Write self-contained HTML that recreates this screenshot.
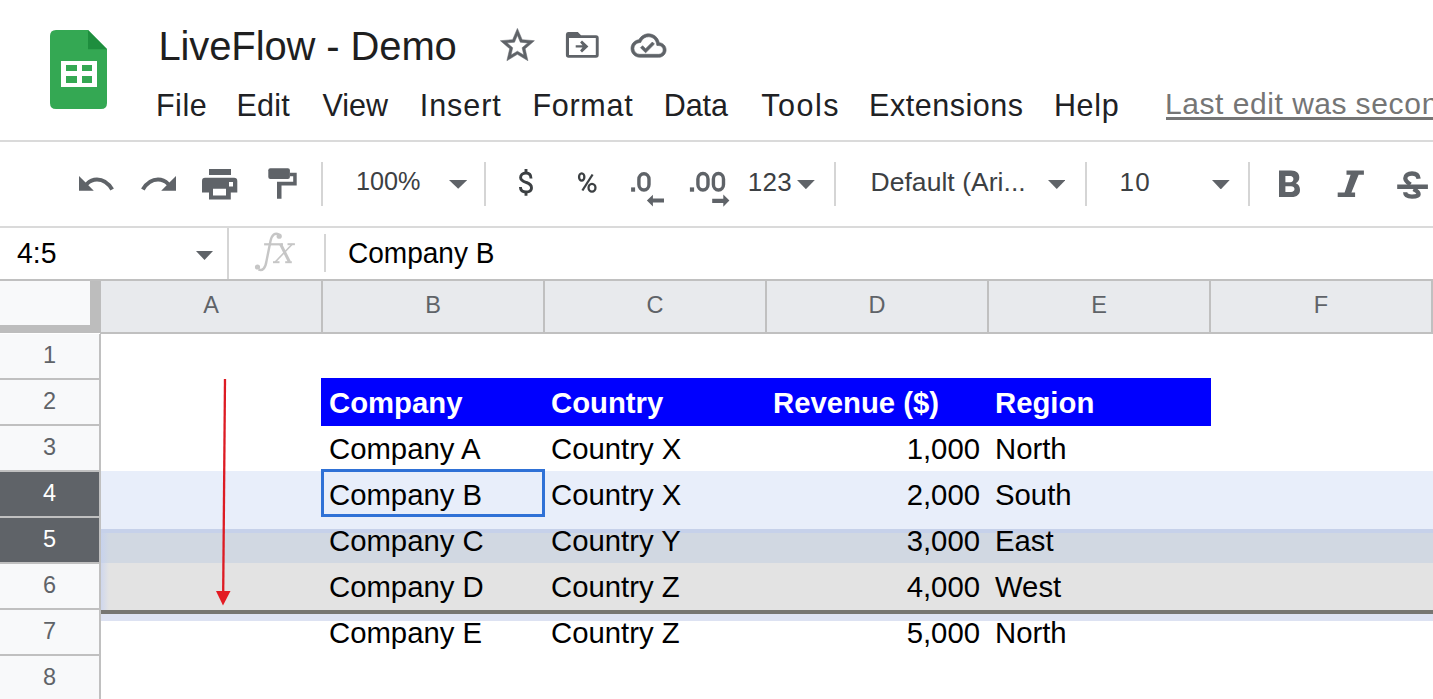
<!DOCTYPE html>
<html><head><meta charset="utf-8"><title>LiveFlow - Demo</title>
<style>
html,body{margin:0;padding:0;}
body{width:1433px;height:699px;overflow:hidden;position:relative;background:#fff;font-family:"Liberation Sans",sans-serif;}
.t{position:absolute;white-space:nowrap;}
.r{position:absolute;}
</style></head><body>
<svg class="r" style="left:50px;top:30px" width="58" height="80" viewBox="0 0 58 80">
<path d="M6 0 H38 L57 19 V73 Q57 79 51 79 H6 Q0 79 0 73 V6 Q0 0 6 0 Z" fill="#34a853"/>
<path d="M38 0 L57 19.3 H38 Z" fill="#1e8e3e"/>
<rect x="11" y="31" width="36" height="26" fill="#fff"/>
<rect x="16" y="35" width="11" height="6" fill="#34a853"/>
<rect x="32" y="35" width="10" height="6" fill="#34a853"/>
<rect x="16" y="46" width="11" height="7" fill="#34a853"/>
<rect x="32" y="46" width="10" height="7" fill="#34a853"/>
</svg>
<div class="t" style="left:158.42px;top:25.74px;font-size:40px;line-height:40px;color:#1f1f1f;font-weight:400;letter-spacing:-0.116px;">LiveFlow - Demo</div>
<svg class="r" style="left:496.5px;top:25.2px" width="40.8" height="40.8" viewBox="0 0 24 24" overflow="visible"><path fill="#5f6368" stroke="#5f6368" stroke-width="0.3" stroke-linejoin="round" d="M22 9.24l-7.19-.62L12 2 9.19 8.63 2 9.24l5.46 4.73L5.82 21 12 17.27 18.18 21l-1.63-7.03L22 9.24zM12 15.4l-3.76 2.27 1-4.28-3.32-2.88 4.38-.38L12 6.1l1.71 4.04 4.38.38-3.32 2.88 1 4.28L12 15.4z"/></svg>
<svg class="r" style="left:560px;top:26px" width="44" height="36" viewBox="0 0 44 36">
<path fill="#5f6368" fill-rule="evenodd" d="M8 6 H17.8 L21 9.3 H36 Q38.7 9.3 38.7 12 V29 Q38.7 31.7 36 31.7 H8.6 Q5.9 31.7 5.9 29 V8.6 Q5.9 6 8 6 Z M9 12.1 V29.1 H35.8 V12.1 Z"/>
<path fill="#5f6368" d="M15.7 19.3 H22.5 L20.1 16.4 L22 14.4 L28.4 20.45 L22 26.5 L20.1 24.5 L22.5 21.6 H15.7 Z"/>
</svg>
<svg class="r" style="left:631.4px;top:28px" width="35.1" height="35.1" viewBox="0 0 24 24" overflow="visible"><path fill="#5f6368" stroke="#5f6368" stroke-width="0.45" d="M19.35 10.04C18.67 6.59 15.64 4 12 4 9.11 4 6.6 5.64 5.35 8.04 2.34 8.36 0 10.91 0 14c0 3.31 2.69 6 6 6h13c2.76 0 5-2.24 5-5 0-2.64-2.05-4.78-4.65-4.96zM19 18H6c-2.21 0-4-1.79-4-4 0-2.05 1.53-3.76 3.56-3.97l1.07-.11.5-.95C8.08 7.14 9.94 6 12 6c2.62 0 4.88 1.86 5.39 4.43l.3 1.5 1.53.11c1.56.1 2.78 1.41 2.78 2.96 0 1.65-1.35 3-3 3zm-9-3.82l-2.09-2.09L6.5 13.5 10 17l6.01-6.01-1.41-1.41z"/></svg>
<div class="t" style="left:155.90px;top:90.28px;font-size:30.5px;line-height:30.5px;color:#202124;font-weight:400;letter-spacing:0.592px;">File</div>
<div class="t" style="left:236.50px;top:90.28px;font-size:30.5px;line-height:30.5px;color:#202124;font-weight:400;letter-spacing:0.254px;">Edit</div>
<div class="t" style="left:322.58px;top:90.28px;font-size:30.5px;line-height:30.5px;color:#202124;font-weight:400;letter-spacing:-0.071px;">View</div>
<div class="t" style="left:419.79px;top:90.28px;font-size:30.5px;line-height:30.5px;color:#202124;font-weight:400;letter-spacing:0.928px;">Insert</div>
<div class="t" style="left:532.50px;top:90.28px;font-size:30.5px;line-height:30.5px;color:#202124;font-weight:400;letter-spacing:0.704px;">Format</div>
<div class="t" style="left:663.80px;top:90.28px;font-size:30.5px;line-height:30.5px;color:#202124;font-weight:400;letter-spacing:-0.105px;">Data</div>
<div class="t" style="left:761.23px;top:90.28px;font-size:30.5px;line-height:30.5px;color:#202124;font-weight:400;letter-spacing:1.546px;">Tools</div>
<div class="t" style="left:869.00px;top:90.28px;font-size:30.5px;line-height:30.5px;color:#202124;font-weight:400;letter-spacing:0.533px;">Extensions</div>
<div class="t" style="left:1053.90px;top:90.28px;font-size:30.5px;line-height:30.5px;color:#202124;font-weight:400;letter-spacing:0.691px;">Help</div>
<div class="t" style="left:1164.94px;top:89.20px;font-size:30px;line-height:30px;color:#757575;font-weight:400;letter-spacing:0.547px;">Last edit was</div>
<div class="t" style="left:1355.46px;top:89.20px;font-size:30px;line-height:30px;color:#757575;font-weight:400;letter-spacing:0.730px;">secon</div>
<div class="r" style="left:1166px;top:116.5px;width:267px;height:3px;background:#757575;"></div>
<div class="r" style="left:0px;top:140px;width:1433px;height:2px;background:#dadada;"></div>
<svg class="r" style="left:74px;top:165px" width="46" height="33" viewBox="0 0 46 33">
<path fill="#5f6368" d="M5 11.1 V25.7 H19.8 L14.3 20.2 Q18 16.6 23 16.6 Q31 16.6 36.4 25.5 L39.9 23.4 Q33 12.6 23 12.6 Q16.3 12.6 11.6 17.6 Z"/>
</svg>
<svg class="r" style="left:134.5px;top:165px" width="46" height="33" viewBox="0 0 46 33">
<g transform="translate(46,0) scale(-1,1)"><path fill="#5f6368" d="M5 11.1 V25.7 H19.8 L14.3 20.2 Q18 16.6 23 16.6 Q31 16.6 36.4 25.5 L39.9 23.4 Q33 12.6 23 12.6 Q16.3 12.6 11.6 17.6 Z"/></g>
</svg>
<svg class="r" style="left:196px;top:162px" width="46" height="42" viewBox="0 0 46 42">
<rect x="13" y="7" width="22" height="6" fill="#5f6368"/>
<path fill="#5f6368" fill-rule="evenodd" d="M9 15.7 H38 Q41.3 15.7 41.3 19 V30.6 H34.8 V37.5 H13 V30.6 H6 V19 Q6 15.7 9 15.7 Z M17 26.7 V33.6 H30 V26.7 Z M33 20.1 V24.6 H37 V20.1 Z"/>
</svg>
<svg class="r" style="left:262px;top:162px" width="42" height="42" viewBox="0 0 42 42">
<rect x="6.3" y="6.3" width="21.6" height="10.8" rx="2" fill="#5f6368"/>
<path fill="#5f6368" d="M27.9 10.8 H34.7 V23.4 H19.5 V36.7 H15 V19.8 H31.2 V14.3 H27.9 Z"/>
</svg>
<div class="r" style="left:321px;top:162px;width:2px;height:44px;background:#d5d5d5;"></div>
<div class="r" style="left:484px;top:162px;width:2px;height:44px;background:#d5d5d5;"></div>
<div class="r" style="left:834px;top:162px;width:2px;height:44px;background:#d5d5d5;"></div>
<div class="r" style="left:1085px;top:162px;width:2px;height:44px;background:#d5d5d5;"></div>
<div class="r" style="left:1248px;top:162px;width:2px;height:44px;background:#d5d5d5;"></div>
<div class="t" style="left:355.68px;top:168.49px;font-size:26px;line-height:26px;color:#3c4043;font-weight:400;transform:scaleX(0.9702);transform-origin:0 0;">100%</div>
<svg class="r" style="left:448.5px;top:180.3px" width="18.4" height="8.8" viewBox="0 0 18.4 8.8"><path d="M0 0 H18.4 L9.2 8.8 Z" fill="#5f6368"/></svg>
<svg class="r" style="left:510px;top:162px" width="94" height="40" viewBox="510 162 94 40">
<g fill="none" stroke="#3c4043" stroke-width="2.9">
<path d="M531 178.5 C531 174.5 528.5 173 526 173 C522.5 173 520.6 175 520.6 177.5 C520.6 180.8 523.5 181.5 526.5 182.5 C529.5 183.5 531.5 185 531.5 188 C531.5 190.5 529.5 192 526 192 C522.5 192 520.5 190 520.4 187"/>
<path d="M526 168.9 V173.5 M526 191.5 V195.8"/>
</g>
<g fill="none" stroke="#3c4043" stroke-width="2.3">
<ellipse cx="581.7" cy="176.95" rx="2.65" ry="3.6"/>
<ellipse cx="592" cy="187.75" rx="3.45" ry="3.9"/>
<path d="M592.6 174.5 L582.4 190.5"/>
</g>
</svg>
<svg class="r" style="left:620px;top:160px" width="120" height="52" viewBox="620 160 120 52">
<g fill="#5f6368">
<rect x="631.1" y="187.4" width="4" height="4.3"/>
<rect x="689.9" y="187.4" width="4.2" height="4.3"/>
<path d="M646.9 200.6 L652.9 194.8 V198.5 H664 V202.6 H652.9 V206.6 Z"/>
<path d="M729.4 200.6 L723.3 194.4 V198.8 H712.2 V202.9 H723.3 V206.8 Z"/>
</g>
<g fill="none" stroke="#5f6368" stroke-width="3.4">
<rect x="638.9" y="173.8" width="10.1" height="16.2" rx="5" ry="5.5"/>
<rect x="697.9" y="173.5" width="10.1" height="16.5" rx="5" ry="5.5"/>
<rect x="713.4" y="173.5" width="10.1" height="16.5" rx="5" ry="5.5"/>
</g>
</svg>
<div class="t" style="left:747.72px;top:169.39px;font-size:26px;line-height:26px;color:#3c4043;font-weight:400;letter-spacing:0.276px;">123</div>
<svg class="r" style="left:796.9px;top:180.1px" width="17.8" height="9.2" viewBox="0 0 17.8 9.2"><path d="M0 0 H17.8 L8.9 9.2 Z" fill="#5f6368"/></svg>
<div class="t" style="left:870.53px;top:168.97px;font-size:26.5px;line-height:26.5px;color:#3c4043;font-weight:400;letter-spacing:0.040px;">Default (Ari...</div>
<svg class="r" style="left:1047.8px;top:180px" width="17.5" height="9" viewBox="0 0 17.5 9"><path d="M0 0 H17.5 L8.75 9 Z" fill="#5f6368"/></svg>
<div class="t" style="left:1119.62px;top:169.39px;font-size:26px;line-height:26px;color:#3c4043;font-weight:400;letter-spacing:1.252px;">10</div>
<svg class="r" style="left:1212px;top:179.8px" width="17.7" height="9.4" viewBox="0 0 17.7 9.4"><path d="M0 0 H17.7 L8.85 9.4 Z" fill="#5f6368"/></svg>
<svg class="r" style="left:1270px;top:164px" width="163" height="40" viewBox="1270 164 163 40">
<path fill="#5f6368" fill-rule="evenodd" d="M1279 170.6 H1291 C1296.8 170.6 1299.3 173.8 1299.3 177.5 C1299.3 180.4 1297.8 182.3 1295.8 183.2 C1298.6 184.2 1300 186.8 1300 190 C1300 194.3 1297.2 197 1291.5 197 H1279 Z M1285.4 175.9 V182.2 H1290.3 C1292.3 182.2 1293.4 180.8 1293.4 179 C1293.4 177.2 1292.3 175.9 1290.3 175.9 Z M1285.4 186.2 V191.9 H1291 C1293.2 191.9 1294.5 190.6 1294.5 189 C1294.5 187.4 1293.2 186.2 1291 186.2 Z"/>
<path fill="#5f6368" d="M1346.5 170.6 H1363.9 V174.8 H1358.6 L1351.4 192.4 H1355.1 V197 H1337.7 V192.4 H1344.6 L1350.6 174.8 H1346.5 Z"/>
<rect x="1397.2" y="184.5" width="30.7" height="4.5" fill="#5f6368"/>
<g fill="none" stroke="#5f6368" stroke-width="4.3">
<path d="M1418.6 178.8 C1418.3 175.4 1415.8 173.5 1412 173.5 C1408 173.5 1405.3 175.4 1405.3 178.2 C1405.3 181 1407.6 182.6 1410.5 184.6"/>
<path d="M1413.5 189 C1417 190.8 1418.6 192.3 1418.6 194.3 C1418.6 196 1416 196.6 1412 196.6 C1407.8 196.6 1405.2 195.2 1405.2 192.3"/>
</g>
</svg>
<div class="r" style="left:0px;top:226px;width:1433px;height:2px;background:#dadada;"></div>
<div class="t" style="left:17.47px;top:237.50px;font-size:30px;line-height:30px;color:#000;font-weight:400;transform:scaleX(0.9477);transform-origin:0 0;">4:5</div>
<svg class="r" style="left:196px;top:251px" width="17" height="9" viewBox="0 0 17 9"><path d="M0 0 H17 L8.5 9 Z" fill="#5f6368"/></svg>
<div class="r" style="left:227px;top:228px;width:2px;height:52px;background:#d5d5d5;"></div>
<svg class="r" style="left:248px;top:228px" width="54" height="50" viewBox="248 228 54 50">
<g fill="none" stroke="#c6c6c6">
<path stroke-width="2.4" d="M258.5 269.5 C262.5 271.5 265.5 268 266.5 261 L270.5 241 C272 234.5 275 232.5 279 234.5"/>
<path stroke-width="3" d="M280.5 244 L289.5 262"/>
<path stroke-width="1.6" d="M292.4 244 L275.2 262"/>
</g>
<g fill="#c6c6c6">
<circle cx="257.5" cy="267" r="2.6"/>
<circle cx="279.2" cy="236.2" r="2.6"/>
<rect x="264.1" y="243.2" width="18.9" height="2.2"/>
<rect x="287.5" y="243.2" width="7.4" height="2"/>
<rect x="273" y="261.2" width="6.5" height="2"/>
<rect x="285.2" y="261.2" width="6.6" height="2"/>
</g>
</svg>
<div class="r" style="left:324px;top:234px;width:2px;height:38px;background:#d5d5d5;"></div>
<div class="t" style="left:347.70px;top:237.50px;font-size:30px;line-height:30px;color:#000;font-weight:400;transform:scaleX(0.9345);transform-origin:0 0;">Company B</div>
<div class="r" style="left:0px;top:279px;width:1433px;height:2px;background:#c0c0c0;"></div>
<div class="r" style="left:0px;top:281px;width:90px;height:44px;background:#f8f9fa;"></div>
<div class="r" style="left:90px;top:281px;width:11px;height:52px;background:#bdbdbd;"></div>
<div class="r" style="left:0px;top:325px;width:101px;height:8px;background:#bdbdbd;"></div>
<div class="r" style="left:101px;top:281px;width:1332px;height:51px;background:#e8eaed;"></div>
<div class="r" style="left:100px;top:332px;width:1333px;height:2px;background:#c0c0c0;"></div>
<div class="r" style="left:321px;top:281px;width:2px;height:52px;background:#c0c0c0;"></div>
<div class="r" style="left:543px;top:281px;width:2px;height:52px;background:#c0c0c0;"></div>
<div class="r" style="left:765px;top:281px;width:2px;height:52px;background:#c0c0c0;"></div>
<div class="r" style="left:987px;top:281px;width:2px;height:52px;background:#c0c0c0;"></div>
<div class="r" style="left:1209px;top:281px;width:2px;height:52px;background:#c0c0c0;"></div>
<div class="r" style="left:1431px;top:281px;width:2px;height:52px;background:#c0c0c0;"></div>
<div class="t" style="left:11.00px;width:400px;text-align:center;top:293.91px;font-size:23.5px;line-height:23.5px;color:#5f6368;font-weight:400;">A</div>
<div class="t" style="left:233.00px;width:400px;text-align:center;top:293.91px;font-size:23.5px;line-height:23.5px;color:#5f6368;font-weight:400;">B</div>
<div class="t" style="left:455.00px;width:400px;text-align:center;top:293.91px;font-size:23.5px;line-height:23.5px;color:#5f6368;font-weight:400;">C</div>
<div class="t" style="left:677.00px;width:400px;text-align:center;top:293.91px;font-size:23.5px;line-height:23.5px;color:#5f6368;font-weight:400;">D</div>
<div class="t" style="left:899.00px;width:400px;text-align:center;top:293.91px;font-size:23.5px;line-height:23.5px;color:#5f6368;font-weight:400;">E</div>
<div class="t" style="left:1121.00px;width:400px;text-align:center;top:293.91px;font-size:23.5px;line-height:23.5px;color:#5f6368;font-weight:400;">F</div>
<div class="r" style="left:0px;top:334px;width:99px;height:365px;background:#f8f9fa;"></div>
<div class="r" style="left:99px;top:334px;width:2px;height:365px;background:#c0c0c0;"></div>
<div class="r" style="left:101px;top:334px;width:1332px;height:365px;background:#ffffff;"></div>
<div class="r" style="left:101px;top:471px;width:1332px;height:58px;background:#e8eefa;"></div>
<div class="r" style="left:0px;top:472px;width:99px;height:44px;background:#5f6368;"></div>
<div class="r" style="left:0px;top:518px;width:99px;height:44px;background:#5f6368;"></div>
<div class="r" style="left:0px;top:378px;width:99px;height:2px;background:#c0c0c0;"></div>
<div class="t" style="left:-150.50px;width:400px;text-align:center;top:343.91px;font-size:23.5px;line-height:23.5px;color:#5f6368;font-weight:400;">1</div>
<div class="r" style="left:0px;top:424px;width:99px;height:2px;background:#c0c0c0;"></div>
<div class="t" style="left:-150.50px;width:400px;text-align:center;top:389.91px;font-size:23.5px;line-height:23.5px;color:#5f6368;font-weight:400;">2</div>
<div class="r" style="left:0px;top:470px;width:99px;height:2px;background:#c0c0c0;"></div>
<div class="t" style="left:-150.50px;width:400px;text-align:center;top:435.91px;font-size:23.5px;line-height:23.5px;color:#5f6368;font-weight:400;">3</div>
<div class="r" style="left:0px;top:516px;width:99px;height:2px;background:#c0c0c0;"></div>
<div class="t" style="left:-150.50px;width:400px;text-align:center;top:481.91px;font-size:23.5px;line-height:23.5px;color:#ffffff;font-weight:400;">4</div>
<div class="r" style="left:0px;top:562px;width:99px;height:2px;background:#c0c0c0;"></div>
<div class="t" style="left:-150.50px;width:400px;text-align:center;top:527.91px;font-size:23.5px;line-height:23.5px;color:#ffffff;font-weight:400;">5</div>
<div class="r" style="left:0px;top:608px;width:99px;height:2px;background:#c0c0c0;"></div>
<div class="t" style="left:-150.50px;width:400px;text-align:center;top:573.91px;font-size:23.5px;line-height:23.5px;color:#5f6368;font-weight:400;">6</div>
<div class="r" style="left:0px;top:654px;width:99px;height:2px;background:#c0c0c0;"></div>
<div class="t" style="left:-150.50px;width:400px;text-align:center;top:619.91px;font-size:23.5px;line-height:23.5px;color:#5f6368;font-weight:400;">7</div>
<div class="r" style="left:0px;top:700px;width:99px;height:2px;background:#c0c0c0;"></div>
<div class="t" style="left:-150.50px;width:400px;text-align:center;top:665.91px;font-size:23.5px;line-height:23.5px;color:#5f6368;font-weight:400;">8</div>
<div class="r" style="left:321px;top:378px;width:890px;height:48px;background:#0000ff;"></div>
<div class="r" style="left:101px;top:529px;width:1332px;height:4px;background:#c6d1ea;"></div>
<div class="r" style="left:101px;top:533px;width:1332px;height:30px;background:#d1d8e2;"></div>
<div class="r" style="left:101px;top:563px;width:1332px;height:47px;background:#e3e3e3;"></div>
<div class="r" style="left:101px;top:533px;width:8px;height:77px;background:linear-gradient(90deg, rgba(190,205,245,0.55), rgba(190,205,245,0));"></div>
<div class="r" style="left:101px;top:614px;width:1332px;height:7px;background:#dde2f2;"></div>
<div class="r" style="left:101px;top:610px;width:1332px;height:4px;background:#777672;"></div>
<div class="t" style="left:329.00px;top:388.00px;font-size:29.3px;line-height:29.3px;color:#fff;font-weight:700;">Company</div>
<div class="t" style="left:551.00px;top:388.00px;font-size:29.3px;line-height:29.3px;color:#fff;font-weight:700;">Country</div>
<div class="t" style="left:773.00px;top:388.00px;font-size:29.3px;line-height:29.3px;color:#fff;font-weight:700;">Revenue ($)</div>
<div class="t" style="left:995.00px;top:388.00px;font-size:29.3px;line-height:29.3px;color:#fff;font-weight:700;">Region</div>
<div class="t" style="left:329.00px;top:434.00px;font-size:29.3px;line-height:29.3px;color:#000;font-weight:400;">Company A</div>
<div class="t" style="left:551.00px;top:434.00px;font-size:29.3px;line-height:29.3px;color:#000;font-weight:400;">Country X</div>
<div class="t" style="right:453.00px;top:434.00px;font-size:29.3px;line-height:29.3px;color:#000;font-weight:400;">1,000</div>
<div class="t" style="left:995.00px;top:434.00px;font-size:29.3px;line-height:29.3px;color:#000;font-weight:400;">North</div>
<div class="t" style="left:329.00px;top:480.00px;font-size:29.3px;line-height:29.3px;color:#000;font-weight:400;">Company B</div>
<div class="t" style="left:551.00px;top:480.00px;font-size:29.3px;line-height:29.3px;color:#000;font-weight:400;">Country X</div>
<div class="t" style="right:453.00px;top:480.00px;font-size:29.3px;line-height:29.3px;color:#000;font-weight:400;">2,000</div>
<div class="t" style="left:995.00px;top:480.00px;font-size:29.3px;line-height:29.3px;color:#000;font-weight:400;">South</div>
<div class="t" style="left:329.00px;top:526.00px;font-size:29.3px;line-height:29.3px;color:#000;font-weight:400;">Company C</div>
<div class="t" style="left:551.00px;top:526.00px;font-size:29.3px;line-height:29.3px;color:#000;font-weight:400;">Country Y</div>
<div class="t" style="right:453.00px;top:526.00px;font-size:29.3px;line-height:29.3px;color:#000;font-weight:400;">3,000</div>
<div class="t" style="left:995.00px;top:526.00px;font-size:29.3px;line-height:29.3px;color:#000;font-weight:400;">East</div>
<div class="t" style="left:329.00px;top:572.00px;font-size:29.3px;line-height:29.3px;color:#000;font-weight:400;">Company D</div>
<div class="t" style="left:551.00px;top:572.00px;font-size:29.3px;line-height:29.3px;color:#000;font-weight:400;">Country Z</div>
<div class="t" style="right:453.00px;top:572.00px;font-size:29.3px;line-height:29.3px;color:#000;font-weight:400;">4,000</div>
<div class="t" style="left:995.00px;top:572.00px;font-size:29.3px;line-height:29.3px;color:#000;font-weight:400;">West</div>
<div class="t" style="left:329.00px;top:618.00px;font-size:29.3px;line-height:29.3px;color:#000;font-weight:400;">Company E</div>
<div class="t" style="left:551.00px;top:618.00px;font-size:29.3px;line-height:29.3px;color:#000;font-weight:400;">Country Z</div>
<div class="t" style="right:453.00px;top:618.00px;font-size:29.3px;line-height:29.3px;color:#000;font-weight:400;">5,000</div>
<div class="t" style="left:995.00px;top:618.00px;font-size:29.3px;line-height:29.3px;color:#000;font-weight:400;">North</div>
<div class="r" style="left:321px;top:469px;width:224px;height:48px;box-sizing:border-box;border:3px solid #2f71d6;"></div>
<svg class="r" style="left:200px;top:370px" width="50" height="250" viewBox="200 370 50 250">
<path d="M225 379 L223.2 592" stroke="#dd1b23" stroke-width="2.3" fill="none"/>
<path d="M216 591 L230.5 591 L223 605.6 Z" fill="#e31b23"/>
</svg>

</body></html>
